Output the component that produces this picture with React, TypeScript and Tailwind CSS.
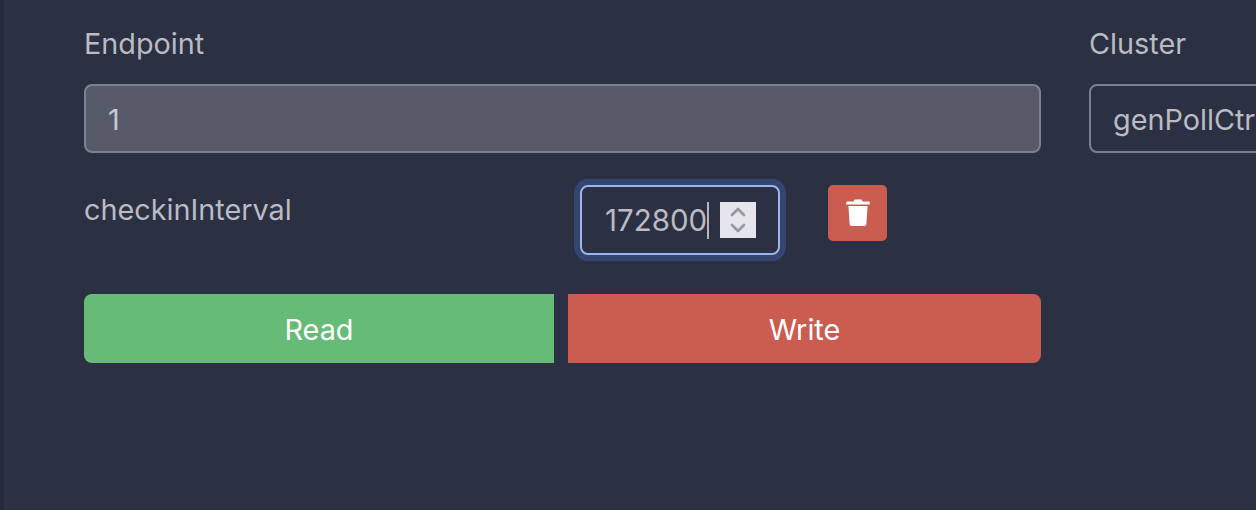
import React from "react";

const Chevrons = () => (
  <svg width="36" height="36" viewBox="0 0 36 36" fill="none" stroke="#9a98a4" strokeWidth="2.8" strokeLinecap="round" strokeLinejoin="round">
    <path d="M12 13 L18 7 L24 13" />
    <path d="M12 23 L18 29 L24 23" />
  </svg>
);

const Trash = () => (
  <svg width="24" height="28" viewBox="0 0 24 28" fill="#ffffff">
    <path d="M8.5 0.5 L15.5 0.5 L16.5 2.5 L22.5 2.5 C23.3 2.5 23.8 3 23.8 4 L23.8 5.5 L0.2 5.5 L0.2 4 C0.2 3 0.7 2.5 1.5 2.5 L7.5 2.5 Z" />
    <path d="M2.4 7 L21.6 7 L20.4 24.8 C20.3 26.2 19.4 27 18 27 L6 27 C4.6 27 3.7 26.2 3.6 24.8 Z" />
  </svg>
);

export default function App() {
  return (
    <div className="flex h-[510px] w-[1256px] overflow-hidden bg-[#2b3043] font-['Inter',sans-serif] text-[28.8px] text-[#babbc3]">
      <div className="w-[4px] shrink-0 bg-[#262a3b]" />
      <div className="flex min-w-0 flex-1 gap-[48px] pl-[80px]">
        <div className="w-[957px] shrink-0 pt-[25px]">
          <label className="block h-[38px] leading-[38px]">Endpoint</label>
          <div className="mt-[21px] flex h-[69px] items-center rounded-[8px] border-2 border-[#7d808e] bg-[#565a69] pl-[22px] pt-[2px] text-[#c8c9cf]">
            1
          </div>
          <div className="mt-[32px] flex h-[77px] items-start">
            <span className="w-[496px] pt-[6px] leading-[38px]">checkinInterval</span>
            <div className="flex h-[70px] w-[200px] items-center rounded-[8px] border-2 border-[#9ab6ea] pl-[23px] shadow-[0_0_0_6px_#344670]">
              <span className="pt-[1px] text-[29.5px] leading-none">172800</span>
              <span className="h-[37px] w-[2px] bg-[#b4b5bd]" />
              <span className="ml-[11px] flex h-[36px] w-[36px] items-center justify-center bg-[#e6e5ec]">
                <Chevrons />
              </span>
            </div>
            <button className="ml-[48px] flex h-[56px] w-[59px] items-center justify-center rounded-[5px] bg-[#cb5c50]">
              <Trash />
            </button>
          </div>
          <div className="mt-[32px] flex h-[69px] gap-[14px] text-white">
            <button className="w-[470px] rounded-l-[8px] bg-[#66bc76] pt-[2px]">Read</button>
            <button className="flex-1 rounded-r-[8px] bg-[#cb5c50] pt-[2px]">Write</button>
          </div>
        </div>
        <div className="min-w-0 flex-1 pt-[25px]">
          <label className="block h-[38px] leading-[38px]">Cluster</label>
          <div className="mt-[21px] flex h-[69px] w-[300px] items-center rounded-[8px] border-2 border-[#7d808e] pl-[22px] pt-[2px] whitespace-nowrap">
            genPollCtrl
          </div>
        </div>
      </div>
    </div>
  );
}
